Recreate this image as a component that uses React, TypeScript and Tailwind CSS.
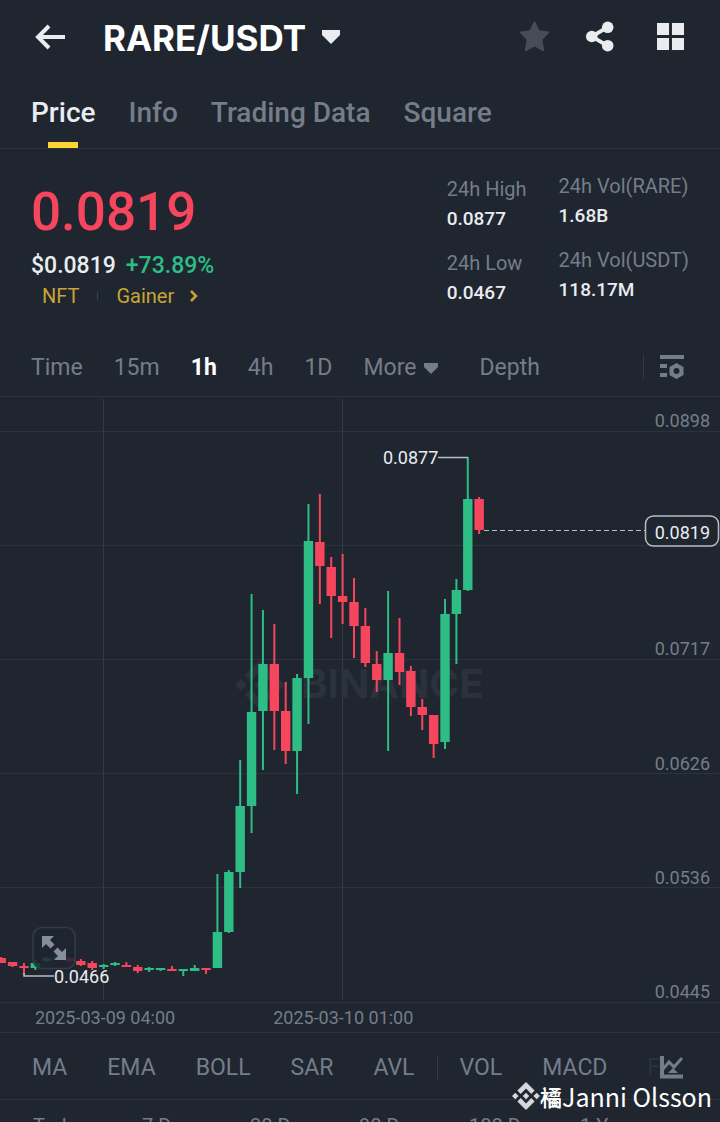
import { useState } from 'react';

interface Candle {
  open: number;
  close: number;
  high: number;
  low: number;
}

// chart coordinates, y grows downwards: a candle is green when close < open
const candles: Candle[] = [
  { open: 561, close: 566, high: 560, low: 566 },
  { open: 565, close: 569, high: 565, low: 570 },
  { open: 569, close: 571, high: 566, low: 578 },
  { open: 571, close: 566, high: 563, low: 573 },
  { open: 564, close: 561, high: 560, low: 565 },
  { open: 562, close: 560, high: 559, low: 563 },
  { open: 561, close: 564, high: 560, low: 565 },
  { open: 564, close: 568, high: 562, low: 569 },
  { open: 566, close: 571, high: 564, low: 573 },
  { open: 570, close: 568, high: 567, low: 572 },
  { open: 568, close: 566, high: 565, low: 569 },
  { open: 568, close: 570, high: 565, low: 570 },
  { open: 570, close: 574, high: 568, low: 576 },
  { open: 573, close: 571, high: 570, low: 575 },
  { open: 573, close: 571, high: 571, low: 574 },
  { open: 572, close: 574, high: 569, low: 574 },
  { open: 574, close: 572, high: 572, low: 579 },
  { open: 574, close: 571, high: 568, low: 574 },
  { open: 571, close: 573, high: 571, low: 577 },
  { open: 571, close: 535, high: 477, low: 571 },
  { open: 535, close: 475, high: 473, low: 536 },
  { open: 475, close: 409, high: 363, low: 491 },
  { open: 409, close: 315, high: 197, low: 436 },
  { open: 314, close: 267, high: 213, low: 373 },
  { open: 267, close: 314, high: 227, low: 353 },
  { open: 314, close: 354, high: 285, low: 367 },
  { open: 354, close: 281, high: 277, low: 397 },
  { open: 281, close: 144, high: 107, low: 327 },
  { open: 145, close: 169, high: 97, low: 207 },
  { open: 170, close: 199, high: 160, low: 241 },
  { open: 199, close: 205, high: 157, low: 227 },
  { open: 205, close: 229, high: 181, low: 261 },
  { open: 229, close: 266, high: 211, low: 270 },
  { open: 267, close: 283, high: 254, low: 295 },
  { open: 283, close: 256, high: 194, low: 354 },
  { open: 256, close: 275, high: 221, low: 288 },
  { open: 274, close: 310, high: 269, low: 319 },
  { open: 310, close: 318, high: 302, low: 333 },
  { open: 318, close: 347, high: 318, low: 361 },
  { open: 345, close: 217, high: 202, low: 352 },
  { open: 217, close: 193, high: 182, low: 267 },
  { open: 193, close: 102, high: 60, low: 194 },
  { open: 102, close: 133, high: 100, low: 137 },
];

const FIRST_X = 1.2;
const STEP = 11.38;

const priceLabels = [
  { y: 30, label: '0.0898' },
  { y: 258, label: '0.0717' },
  { y: 373, label: '0.0626' },
  { y: 487, label: '0.0536' },
  { y: 601, label: '0.0445' },
];

const tabs = ['Price', 'Info', 'Trading Data', 'Square'];
const frames = ['Time', '15m', '1h', '4h', '1D'];
const mainIndicators = ['MA', 'EMA', 'BOLL', 'SAR', 'AVL'];
const periods = ['Today', '7 Days', '30 Days', '90 Days', '180 Days', '1 Year'];

const stats = [
  [
    { label: '24h High', value: '0.0877' },
    { label: '24h Low', value: '0.0467' },
  ],
  [
    { label: '24h Vol(RARE)', value: '1.68B' },
    { label: '24h Vol(USDT)', value: '118.17M' },
  ],
];

function BinanceMark({ className }: { className: string }) {
  return (
    <svg viewBox="0 0 28 28" fill="currentColor" className={className} aria-hidden="true">
      <path d="M14 0l8.6 8.6-3.3 3.3L14 6.6l-5.3 5.3-3.3-3.3z" />
      <path d="M14 28l8.6-8.6-3.3-3.3-5.3 5.3-5.3-5.3-3.3 3.3z" />
      <path d="M3.3 10.7L6.6 14l-3.3 3.3L0 14zM14 10.7l3.3 3.3-3.3 3.3-3.3-3.3zM24.7 10.7L28 14l-3.3 3.3-3.3-3.3z" />
    </svg>
  );
}

function Caret({ className }: { className: string }) {
  return (
    <svg viewBox="0 0 18 14" fill="currentColor" className={className} aria-hidden="true">
      <path d="M0 0h18v5l-9 9-9-9z" />
    </svg>
  );
}

function Header() {
  return (
    <header className="flex h-[73px] items-center pr-9 pl-[34px]">
      <button aria-label="Back" className="text-[#eaecef]">
        <svg viewBox="0 0 32 26" fill="none" stroke="currentColor" strokeWidth="4" className="h-[26px] w-8">
          <path d="M31 13H4M15 2L4 13l11 11" />
        </svg>
      </button>
      <button className="ml-[37px] flex items-center gap-4 text-white">
        <h1 className="pt-[2px] font-[Inter] text-[35px] leading-10 font-bold">RARE/USDT</h1>
        <Caret className="h-[14px] w-[18px] text-[#eaecef]" />
      </button>
      <div className="ml-auto flex items-center gap-[35px] text-[#eaecef]">
        <button aria-label="Favorite" className="text-[#474d57]">
          <svg viewBox="0 0 32 32" fill="currentColor" stroke="currentColor" strokeWidth="2" strokeLinejoin="round" className="size-[31px]">
            <path d="M16 1.500l4.300 9 9.700 1.400-6.900 6.900 1.900 11.200-9-4.800-9 4.800 1.900-11.200L2 11.900l9.700-1.400z" />
          </svg>
        </button>
        <button aria-label="Share">
          <svg viewBox="0 0 30 32" fill="currentColor" stroke="currentColor" className="h-[31px] w-[29px]">
            <path d="M23 6.500L7 16l16 9.500" fill="none" strokeWidth="4" />
            <circle cx="7" cy="16" r="6" stroke="none" />
            <circle cx="23.500" cy="6.500" r="6" stroke="none" />
            <circle cx="23.500" cy="25.500" r="6" stroke="none" />
          </svg>
        </button>
        <button aria-label="Menu" className="ml-2">
          <svg viewBox="0 0 28 28" fill="currentColor" className="size-[27px]">
            <path d="M0 0h12.500v12.500H0zM15.500 0H28v12.500H15.500zM0 15.500h12.500V28H0zM15.500 15.500H28V28H15.500z" />
          </svg>
        </button>
      </div>
    </header>
  );
}

function PriceChart() {
  return (
    <svg viewBox="0 0 720 606" className="block w-full" role="img" aria-label="RARE/USDT hourly candles">
      <g stroke="#2c333d" strokeWidth="1">
        {[34.5, 148.5, 262.5, 376.5, 490.5, 605.5].map((y) => (
          <line key={y} x1="0" x2="720" y1={y} y2={y} />
        ))}
        <line x1="103.500" x2="103.500" y1="2" y2="603" stroke="#343b45" />
        <line x1="342.500" x2="342.500" y1="2" y2="603" stroke="#343b45" />
      </g>

      {/* watermark */}
      <g fill="#2b323d">
        <svg x="235" y="263" width="50" height="50" viewBox="0 0 28 28">
          <path d="M14 0l8.600 8.600-3.300 3.300L14 6.600l-5.300 5.300-3.300-3.300zM14 28l8.600-8.600-3.300-3.300-5.300 5.300-5.300-5.300-3.300 3.300zM3.300 10.700L6.600 14l-3.300 3.300L0 14zM14 10.700l3.300 3.300-3.300 3.300-3.300-3.300zM24.700 10.700L28 14l-3.300 3.300-3.300-3.300z" />
        </svg>
        <text x="301" y="301" className="font-[Inter] text-[40px] font-bold">
          BINANCE
        </text>
      </g>

      {candles.map((c, i) => {
        const x = FIRST_X + i * STEP;
        const top = Math.min(c.open, c.close);
        const color = c.close < c.open ? '#2ebd85' : '#f6465d';
        return (
          <g key={i} fill={color}>
            <rect x={x - 1} y={c.high} width="2" height={c.low - c.high} />
            <rect x={x - 4.7} y={top} width="9.400" height={Math.abs(c.close - c.open)} />
          </g>
        );
      })}

      {/* high / low markers */}
      <g fill="none" stroke="#b7bdc6" strokeWidth="1.500">
        <path d="M438 60.500h30" />
        <path d="M24 576v3h30" />
        <path d="M484 133.500h161" strokeWidth="1" strokeDasharray="5 3" />
      </g>
      <g fill="#eaecef" className="text-[18px]">
        <text x="383" y="67">0.0877</text>
        <text x="54" y="586">0.0466</text>
      </g>

      <g fill="#757d8a" textAnchor="end" className="text-[18px]">
        {priceLabels.map((p) => (
          <text key={p.label} x="710" y={p.y}>
            {p.label}
          </text>
        ))}
      </g>
      <rect x="645.500" y="119" width="73" height="30" rx="8" fill="#1f2630" stroke="#b7bdc6" strokeWidth="1.500" />
      <text x="710" y="142" fill="#eaecef" textAnchor="end" className="text-[18px]">
        0.0819
      </text>

      {/* fullscreen toggle */}
      <rect x="33" y="530.500" width="42" height="41" rx="9" fill="#1f2630" fillOpacity="0.850" stroke="#343b45" strokeWidth="1.500" />
      <g fill="#848e9c">
        <path d="M42 539h12l-4 4 4.500 4.500-4 4L46 547l-4 4z" />
        <path d="M66 563H54l4-4-4.500-4.500 4-4L62 555l4-4z" />
      </g>
    </svg>
  );
}

export default function App() {
  const [tab, setTab] = useState('Price');
  const [frame, setFrame] = useState('1h');

  return (
    <main className="relative h-screen overflow-hidden bg-[#1f2630] font-[Roboto,sans-serif] text-[#757d8a]">
      <Header />

      <nav className="flex h-[76px] gap-[33px] border-b border-[#2c333d] px-[31px]">
        {tabs.map((t) => (
          <button
            key={t}
            onClick={() => setTab(t)}
            className={`flex flex-col items-center justify-between text-[28px] font-medium ${t === tab ? 'text-[#eaecef]' : ''}`}
          >
            <span className="pt-5 leading-10">{t}</span>
            {t === tab && <span className="h-[6px] w-[30px] bg-[#fcd535]" />}
          </button>
        ))}
      </nav>

      <section className="flex justify-between pr-[31px] pl-[31px]">
        <div className="pt-[31px]">
          <p className="text-[53px] leading-[64px] font-medium text-[#f6465d]">0.0819</p>
          <p className="mt-2 flex gap-[10px] text-[23px] leading-7 font-medium">
            <span className="text-[#eaecef]">$0.0819</span>
            <span className="text-[#2ebd85]">+73.89%</span>
          </p>
          <div className="mt-[2px] flex items-center pl-[11px] text-[20px] leading-7 text-[#c9a436]">
            <a href="#nft">NFT</a>
            <span className="mx-[18px] h-2 w-px bg-[#3a424d]" />
            <a href="#gainer" className="flex items-center gap-4">
              Gainer
              <svg viewBox="0 0 8 12" fill="none" stroke="currentColor" strokeWidth="2.500" className="h-3 w-2">
                <path d="M1 1l5 5-5 5" />
              </svg>
            </a>
          </div>
        </div>
        <div className="flex gap-8 pt-[23px]">
          {stats.map((column, i) => (
            <dl key={i} className={i === 0 ? 'pt-[3px]' : ''}>
              {column.map((s) => (
                <div key={s.label} className="mb-4 leading-[29px]">
                  <dt className="text-[20px]">{s.label}</dt>
                  <dd className="text-[19px] font-medium text-[#eaecef]">{s.value}</dd>
                </div>
              ))}
            </dl>
          ))}
        </div>
      </section>

      <div className="mt-[14px] flex h-[60px] items-center border-b border-[#2c333d] pr-9 pl-[31px] text-[23px]">
        <div className="flex gap-[31px] pt-1">
          {frames.map((f) => (
            <button
              key={f}
              onClick={() => setFrame(f)}
              className={f === frame ? 'font-bold text-white' : ''}
            >
              {f}
            </button>
          ))}
          <button className="flex items-center gap-2">
            More
            <Caret className="h-[11px] w-[14px]" />
          </button>
          <button className="ml-[10px]">Depth</button>
        </div>
        <span className="mr-4 ml-auto h-6 w-px bg-[#343b45]" />
        <button aria-label="Chart settings">
          <svg viewBox="0 0 24 24" fill="currentColor" className="size-6">
            <path d="M0 0h24v4H0zM0 9h7v4H0zM0 18h7v4H0z" />
            <path fillRule="evenodd" d="M16.500 8l7 4v8l-7 4-7-4v-8zm0 5a3 3 0 100 6 3 3 0 000-6z" />
          </svg>
        </button>
      </div>

      <PriceChart />

      <div className="flex h-[30px] items-center gap-[98px] border-b border-[#2c333d] pl-[35px] text-[18px]">
        <time>2025-03-09 04:00</time>
        <time>2025-03-10 01:00</time>
      </div>

      <div className="flex h-[67px] items-center border-b border-[#2c333d] pt-1 pr-9 pl-8 text-[23px]">
        <div className="flex gap-10">
          {mainIndicators.map((name) => (
            <button key={name}>{name}</button>
          ))}
        </div>
        <span className="mx-[22px] h-6 w-px bg-[#343b45]" />
        <div className="flex gap-10">
          <button>VOL</button>
          <button>MACD</button>
        </div>
        <span className="ml-auto text-[#2c333d]">F</span>
        <button aria-label="Indicator settings">
          <svg viewBox="0 2 24 24" fill="none" stroke="currentColor" strokeWidth="3" className="size-6">
            <path d="M2 2v20.500h21" strokeWidth="4" />
            <path d="M3 15l6-7 5 5 8-9" />
            <path d="M13 14l5 5H8z" fill="currentColor" stroke="none" />
          </svg>
        </button>
      </div>

      <div className="grid grid-cols-[109px_108px_109px_110px_111px_1fr] pt-3 pl-[33px] text-[20px] leading-7">
        {periods.map((p) => (
          <span key={p}>{p}</span>
        ))}
      </div>

      {/* author signature over the bottom corner */}
      <div className="absolute right-2 bottom-3 flex items-center font-['Noto_Sans_CJK_SC',sans-serif] text-[25px] leading-6 text-white">
        <BinanceMark className="size-7 text-[#d5d8dc]" />
        <span className="grid text-[22px]">
          <span className="col-start-1 row-start-1">橘</span>
          <span className="col-start-1 row-start-1">福</span>
        </span>
        <span>Janni Olsson</span>
      </div>
    </main>
  );
}
